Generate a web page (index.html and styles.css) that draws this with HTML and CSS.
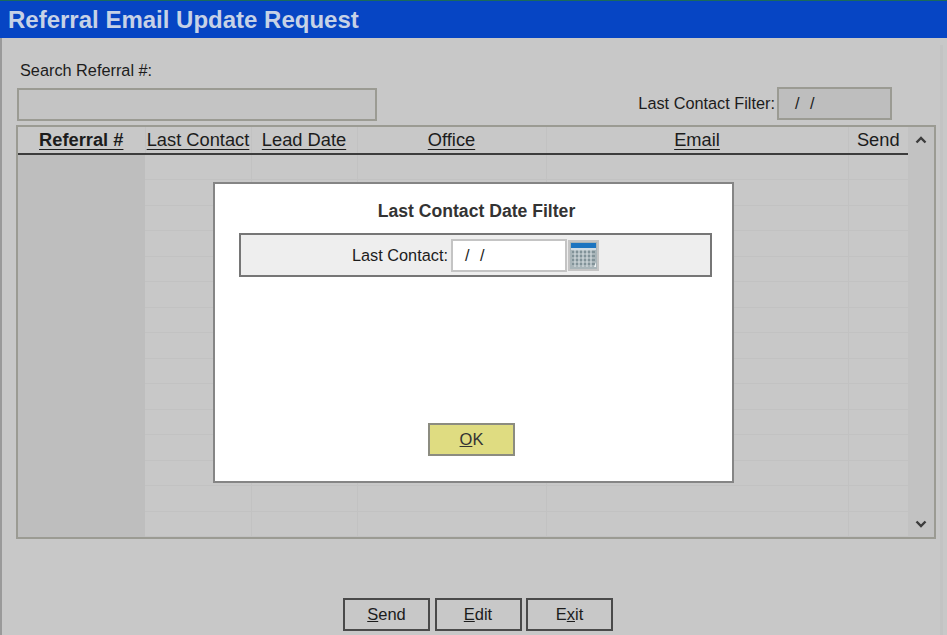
FILE: index.html
```html
<!DOCTYPE html>
<html lang="en">
<head>
    <meta charset="UTF-8">
    <title>Referral Email Update Request</title>
    <link rel="stylesheet" href="styles.css">
</head>
<body>
    <div class="titlebar">Referral Email Update Request</div>

    <div class="filters">
        <div class="search">
            <label class="search-label">Search Referral #:</label>
            <div class="field search-field"></div>
        </div>
        <div class="contact-filter">
            <label>Last Contact Filter:</label>
            <div class="field contact-field">/ /</div>
        </div>
    </div>

    <div class="grid">
        <table class="grid-table">
            <colgroup>
                <col class="col-ref">
                <col class="col-contact">
                <col class="col-lead">
                <col class="col-office">
                <col class="col-email">
                <col class="col-send">
            </colgroup>
            <thead>
                <tr>
                    <th><u class="bold">Referral #</u></th>
                    <th><u>Last Contact</u></th>
                    <th><u>Lead Date</u></th>
                    <th><u>Office</u></th>
                    <th><u>Email</u></th>
                    <th>Send</th>
                </tr>
            </thead>
            <tbody>
                <tr><td></td><td></td><td></td><td></td><td></td><td></td></tr>
                <tr><td></td><td></td><td></td><td></td><td></td><td></td></tr>
                <tr><td></td><td></td><td></td><td></td><td></td><td></td></tr>
                <tr><td></td><td></td><td></td><td></td><td></td><td></td></tr>
                <tr><td></td><td></td><td></td><td></td><td></td><td></td></tr>
                <tr><td></td><td></td><td></td><td></td><td></td><td></td></tr>
                <tr><td></td><td></td><td></td><td></td><td></td><td></td></tr>
                <tr><td></td><td></td><td></td><td></td><td></td><td></td></tr>
                <tr><td></td><td></td><td></td><td></td><td></td><td></td></tr>
                <tr><td></td><td></td><td></td><td></td><td></td><td></td></tr>
                <tr><td></td><td></td><td></td><td></td><td></td><td></td></tr>
                <tr><td></td><td></td><td></td><td></td><td></td><td></td></tr>
                <tr><td></td><td></td><td></td><td></td><td></td><td></td></tr>
                <tr><td></td><td></td><td></td><td></td><td></td><td></td></tr>
                <tr><td></td><td></td><td></td><td></td><td></td><td></td></tr>
            </tbody>
        </table>
        <div class="scrollbar">
            <svg width="12" height="8" viewBox="0 0 12 8"><path d="M1.5 6.5 L6 2 L10.5 6.5" fill="none" stroke="#3c3c3c" stroke-width="2.4"/></svg>
            <svg width="12" height="8" viewBox="0 0 12 8"><path d="M1.5 1.5 L6 6 L10.5 1.5" fill="none" stroke="#3c3c3c" stroke-width="2.4"/></svg>
        </div>
    </div>

    <div class="actions">
        <button class="btn"><u>S</u>end</button>
        <button class="btn"><u>E</u>dit</button>
        <button class="btn">E<u>x</u>it</button>
    </div>

    <!-- faint track of the page scrollbar -->
    <div class="page-track"></div>

    <!-- date filter dialog -->
    <div class="dialog">
        <h2 class="dialog-title">Last Contact Date Filter</h2>
        <div class="dialog-panel">
            <label>Last Contact:</label>
            <div class="date-input">/ /</div>
            <div class="cal-btn">
                <svg width="27" height="27" viewBox="0 0 27 27">
                    <rect x="0" y="0" width="27" height="27" fill="#a9b5b9"/>
                    <rect x="1" y="1" width="25" height="5" fill="#1c74c0"/>
                    <rect x="1" y="6" width="25" height="2" fill="#cfdbe4"/>
                    <path d="M2 10H25M2 14H25M2 18H25M2 22H25" stroke="#74868d" stroke-width="1.4"/>
                    <path d="M5 8V25M9 8V25M13 8V25M17 8V25M21 8V25" stroke="#d5dde0" stroke-width="1.2"/>
                    <path d="M16 25H24L26 20V25Z" fill="#eef2f3"/>
                </svg>
            </div>
        </div>
        <button class="ok-btn"><u>O</u>K</button>
    </div>
</body>
</html>
```

FILE: styles.css
```css
* {
    box-sizing: border-box;
}

body {
    position: relative;
    width: 947px;
    height: 635px;
    margin: 0;
    overflow: hidden;
    background: #c8c8c8;
    box-shadow: inset 2px 0 #9a9a9a;
    color: #1c1c1c;
    font-family: "Liberation Sans", Arial, sans-serif;
    font-size: 16.3px;
}

.titlebar {
    height: 38px;
    padding-left: 8px;
    border-top: 1px solid #1a6a5c;
    background: #0645c4;
    color: #c6d2e6;
    font-size: 24px;
    font-weight: bold;
    line-height: 37px;
}

.filters {
    display: flex;
    justify-content: space-between;
    align-items: flex-end;
    height: 83px;
    padding: 0 55px 0 17px;
}

.search-label {
    display: block;
    margin: 0 0 10px 3px;
    line-height: 16px;
}

.field {
    border: 2px solid #9b9b93;
    background: #c4c4c4;
}

.search-field {
    width: 360px;
    height: 33px;
}

.contact-filter {
    display: flex;
    align-items: center;
    gap: 2px;
    margin-bottom: 1px;
}

.contact-field {
    width: 115px;
    height: 33px;
    padding-left: 16px;
    background: #bebebe;
    line-height: 29px;
    word-spacing: 6px;
}

.grid {
    display: flex;
    width: 920px;
    height: 414px;
    margin: 4px 0 0 16px;
    border: 2px solid #9b9b93;
}

.grid-table {
    width: 890px;
    height: 410px;
    border-collapse: collapse;
    table-layout: fixed;
}

.col-ref { width: 127px; }
.col-contact { width: 106px; }
.col-lead { width: 106px; }
.col-office { width: 189px; }
.col-email { width: 302px; }
.col-send { width: 60px; }

.grid-table thead tr {
    height: 27px;
    border-bottom: 2px solid #3c3c3c;
}

.grid-table th {
    padding: 0;
    border-right: 1px solid #c2c2c2;
    font-size: 18.3px;
    font-weight: normal;
    white-space: nowrap;
}

.grid-table th:last-child {
    border-right: 0;
}

.grid-table th u {
    text-underline-offset: 3px;
}

.bold {
    font-weight: bold;
}

.grid-table tbody tr {
    height: 25.5px;
}

.grid-table td {
    padding: 0;
    border-right: 1px solid #c2c2c2;
    border-bottom: 1px solid #c2c2c2;
}

.grid-table td:last-child {
    border-right: 0;
}

.grid-table td:first-child {
    border: 0;
    background: #bebebe;
}

.scrollbar {
    display: flex;
    flex-direction: column;
    justify-content: space-between;
    align-items: center;
    width: 26px;
    padding: 9px 0;
    background: #c2c2c2;
}

.actions {
    display: flex;
    gap: 4.5px;
    margin-top: 59px;
    padding-left: 343px;
}

.btn {
    width: 87px;
    height: 33px;
    border: 2px solid #4a4a4a;
    background: #c8c8c8;
    color: #1c1c1c;
    font-family: inherit;
    font-size: 16.5px;
}

.page-track {
    position: absolute;
    left: 940px;
    top: 45px;
    bottom: 0;
    width: 3px;
    background: #c3c3c3;
}

/* overlay dialog */
.dialog {
    position: absolute;
    left: 213px;
    top: 182px;
    width: 521px;
    height: 301px;
    border: 2px solid #858585;
    background: #fff;
}

.dialog-title {
    margin: 18px 0 12px;
    padding-left: 6px;
    font-size: 17.6px;
    line-height: 19px;
    text-align: center;
    color: #333;
}

.dialog-panel {
    display: flex;
    align-items: center;
    gap: 3px;
    width: 473px;
    height: 44px;
    margin-left: 24px;
    padding-left: 111px;
    border: 2px solid #767676;
    background: #eeeeee;
}

.date-input {
    width: 116px;
    height: 33px;
    padding-left: 12px;
    border: 2px solid #c4c4c4;
    background: #fff;
    line-height: 29px;
    word-spacing: 6px;
}

.cal-btn {
    width: 31px;
    height: 31px;
    margin-left: -2px;
    padding: 2px;
    background: #c4c4c4;
}

.cal-btn svg {
    display: block;
}

.ok-btn {
    display: block;
    width: 87px;
    height: 33px;
    margin: 146px 0 0 213px;
    border: 2px solid #8c8c80;
    background: #dfdc81;
    color: #333;
    font-family: inherit;
    font-size: 16.5px;
}
```
